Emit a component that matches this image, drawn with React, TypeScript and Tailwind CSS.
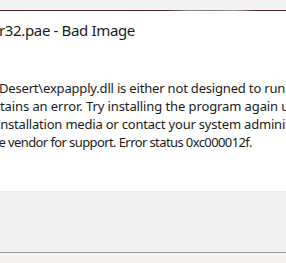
export default function App() {
  const lines = [
    { text: 'Desert\\expapply.dll is either not designed to run on Windows or it', cls: '-ml-[1px] tracking-[-0.18px]' },
    { text: 'tains an error. Try installing the program again using the original', cls: 'ml-0 tracking-[-0.1px]' },
    { text: 'Installation media or contact your system administrator or the', cls: '-ml-[4px] tracking-[-0.2px]' },
    { text: 'the vendor for support. Error status 0xc000012f.', cls: '-ml-[13px] tracking-[-0.6px]' },
  ]

  return (
    <div className="w-[286px] h-[263px] overflow-hidden bg-white flex flex-col font-['Noto_Sans',sans-serif] text-[#1b1b1b]">
      <div className="h-[10px] bg-[#f3f3f3] shrink-0" />
      <div className="h-[1px] shrink-0 bg-[linear-gradient(90deg,#4a2a2a_0%,#4a2a2a_58%,#8a8a82_66%,#7a7a70_75%,#9a9a94_82%,#4a2a2a_90%,#4a2a2a_100%)]" />
      <div className="h-[180px] shrink-0 bg-white">
        <div className="mt-[9px] -ml-[1px] text-[15px] leading-[20px] tracking-[-0.35px] whitespace-nowrap">r32.pae - Bad Image</div>
        <div className="mt-[39px] text-[13px] leading-[18px]">
          {lines.map((l, i) => (
            <div key={i} className={`whitespace-nowrap ${l.cls}`}>{l.text}</div>
          ))}
        </div>
      </div>
      <div className="h-[61px] shrink-0 bg-[#f0f0f0] border-t border-[#ececec]" />
      <div className="h-[1px] shrink-0 bg-[#9c9a98]" />
      <div className="flex-1 bg-[#f5f3f2]" />
    </div>
  )
}
